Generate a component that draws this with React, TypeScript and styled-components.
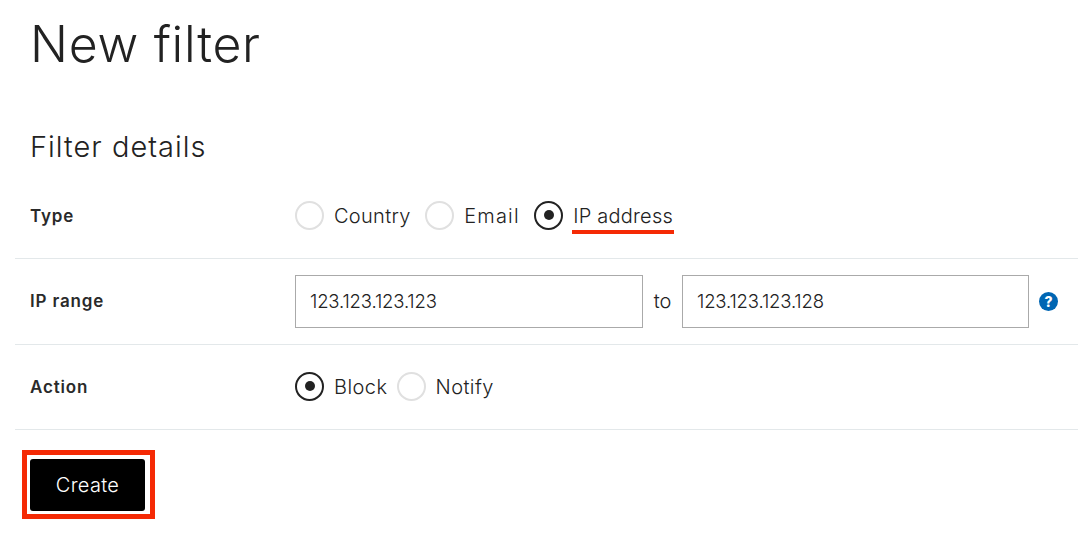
import React from 'react';
import styled, { createGlobalStyle } from 'styled-components';

const GlobalStyle = createGlobalStyle`
  html, body {
    margin: 0;
    padding: 0;
    background: #fff;
  }
  body {
    font-family: Inter, "Open Sans", "Liberation Sans", sans-serif;
    color: #222;
  }
`;

const Page = styled.div`
  width: 1078px;
  height: 548px;
  padding-left: 15px;
  box-sizing: border-box;
  overflow: hidden;
`;

const Title = styled.h1`
  margin: 0;
  padding: 13px 0 0 15px;
  font-size: 50px;
  line-height: 62px;
  font-weight: 300;
  letter-spacing: 0.7px;
  color: #222;
`;

const SectionTitle = styled.h2`
  margin: 0;
  padding: 53px 0 6px 15px;
  font-size: 29px;
  line-height: 38px;
  font-weight: 300;
  letter-spacing: 1px;
  color: #222;
`;

const Row = styled.div<{ $height: number; $lift?: number }>`
  display: flex;
  align-items: center;
  height: ${p => p.$height}px;
  border-bottom: 1px solid #e3e8ea;
  box-sizing: border-box;
  padding-left: 15px;
  padding-bottom: ${p => p.$lift ?? 0}px;
`;

const Label = styled.div<{ $drop: number }>`
  width: 265px;
  flex: none;
  margin-top: ${p => p.$drop}px;
  font-size: 17px;
  font-weight: 600;
  letter-spacing: 0.85px;
  color: #2a2a2a;
`;

const Options = styled.div<{ $gap: number }>`
  display: flex;
  align-items: center;
  gap: ${p => p.$gap}px;
`;

const Option = styled.label`
  position: relative;
  display: flex;
  align-items: center;
  gap: 10px;
  color: #222;
`;

const OptionText = styled.span<{ $tracking?: number }>`
  padding-top: 2px;
  font-size: 20px;
  font-weight: 300;
  letter-spacing: ${p => p.$tracking ?? 0.45}px;
`;

const Radio = styled.span<{ $checked?: boolean }>`
  width: 29px;
  height: 29px;
  box-sizing: border-box;
  border-radius: 50%;
  border: 2px solid ${p => (p.$checked ? '#222' : '#e0e0e0')};
  display: flex;
  align-items: center;
  justify-content: center;

  &::after {
    content: '';
    display: ${p => (p.$checked ? 'block' : 'none')};
    width: 10px;
    height: 10px;
    border-radius: 50%;
    background: #222;
  }
`;

const Underline = styled.span`
  position: absolute;
  left: 38px;
  right: -1px;
  bottom: -4px;
  height: 4px;
  background: #f52a05;
`;

const RangeRow = styled.div`
  display: flex;
  align-items: center;
`;

const Field = styled.div<{ $width: number }>`
  width: ${p => p.$width}px;
  height: 53px;
  box-sizing: border-box;
  border: 1px solid #aaa;
  display: flex;
  align-items: center;
  padding: 0 0 2px 14px;
  font-size: 18.5px;
  font-weight: 300;
  letter-spacing: -0.15px;
  color: #222;
`;

const To = styled.span`
  width: 39px;
  padding-bottom: 2px;
  text-align: center;
  font-size: 20px;
  font-weight: 300;
`;

const Help = styled.span`
  margin-left: 10px;
  width: 19px;
  height: 19px;
  border-radius: 50%;
  background: #0066b3;
  color: #fff;
  font-size: 14px;
  font-weight: 800;
  display: flex;
  align-items: center;
  justify-content: center;
`;

const ButtonWrap = styled.div`
  margin: 20px 0 0 7px;
  width: 133px;
  height: 69px;
  box-sizing: border-box;
  border: 5px solid #f52a05;
  padding: 4px 0 0 3px;
`;

const CreateButton = styled.button`
  display: block;
  width: 115px;
  height: 52px;
  background: #000;
  color: #fff;
  border: 0;
  border-radius: 3px;
  font-family: inherit;
  font-size: 20px;
  font-weight: 300;
  letter-spacing: 0.3px;
`;

export default function App() {
  return (
    <Page>
      <GlobalStyle />
      <Title>New filter</Title>
      <SectionTitle>Filter details</SectionTitle>
      <Row $height={87}>
        <Label $drop={2}>Type</Label>
        <Options $gap={14.5}>
          <Option><Radio /><OptionText $tracking={0.3}>Country</OptionText></Option>
          <Option><Radio /><OptionText $tracking={1.2}>Email</OptionText></Option>
          <Option>
            <Radio $checked />
            <OptionText $tracking={0.2}>IP address</OptionText>
            <Underline />
          </Option>
        </Options>
      </Row>
      <Row $height={86}>
        <Label $drop={-1}>IP range</Label>
        <RangeRow>
          <Field $width={348}>123.123.123.123</Field>
          <To>to</To>
          <Field $width={347}>123.123.123.128</Field>
          <Help>?</Help>
        </RangeRow>
      </Row>
      <Row $height={85} $lift={2}>
        <Label $drop={1}>Action</Label>
        <Options $gap={9}>
          <Option><Radio $checked /><OptionText>Block</OptionText></Option>
          <Option><Radio /><OptionText>Notify</OptionText></Option>
        </Options>
      </Row>
      <ButtonWrap>
        <CreateButton>Create</CreateButton>
      </ButtonWrap>
    </Page>
  );
}
